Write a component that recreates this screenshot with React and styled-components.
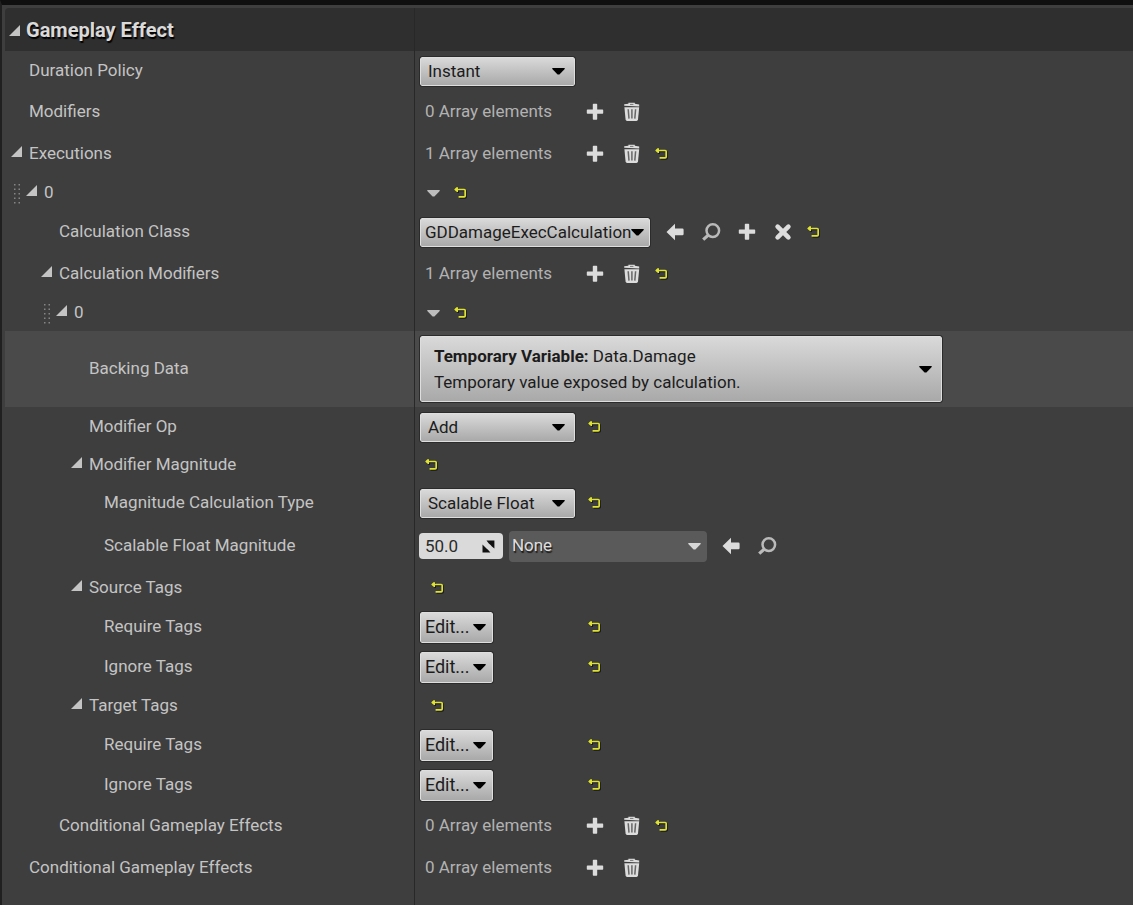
import React from "react";
import styled, { createGlobalStyle } from "styled-components";

const GlobalStyle = createGlobalStyle`
  *, *::before, *::after { box-sizing: border-box; }
  body {
    margin: 0;
    background: #3e3e3e;
    color: #c4c4c4;
    font-family: Roboto, "Liberation Sans", sans-serif;
    font-size: 16px;
    line-height: 20px;
  }
  button, input, select { font: inherit; color: inherit; margin: 0; }
`;

const Panel = styled.main`
  min-height: 100vh;
  display: flex;
  flex-direction: column;
  border-top: 5px solid #0f0f0f;
  border-left: 2px solid #202020;
  padding: 3px 0 0 3px;
`;

const Row = styled.div`
  display: grid;
  grid-template-columns: 29fr 51fr;
  min-height: ${(p) => p.$height}px;
  background: ${(p) => (p.$active ? "#4a4a4a" : "transparent")};
`;

const HeaderRow = styled(Row)`
  background: #2f2f2f;
  border-top-left-radius: 4px;
`;

const Filler = styled(Row)`
  flex: 1;
`;

const NameCell = styled.div`
  display: flex;
  align-items: center;
  min-width: 0;
  padding-left: ${(p) => p.$indent}px;
  white-space: nowrap;
`;

const ValueCell = styled.div`
  display: flex;
  align-items: center;
  gap: ${(p) => p.$gap || 0}px;
  min-width: 0;
  padding-left: ${(p) => p.$inset || 0}px;
  border-left: 1px solid #282828;
`;

const Title = styled.h1`
  margin: 0;
  font-size: 20px;
  line-height: 24px;
  font-weight: 700;
  color: #dadada;
  text-shadow: 1px 2px 1px #000;
`;

const Name = styled.label`
  padding-bottom: 2px;
  font-size: 17px;
`;

const Twisty = styled.button`
  display: flex;
  width: 18px;
  height: 16px;
  padding: 0;
  border: 0;
  background: none;
`;

const HeaderTwisty = styled(Twisty)`
  width: 17px;
  height: 10px;
`;

const Handle = styled.span`
  display: flex;
  width: 13px;
`;

const Count = styled.output`
  width: 152px;
  padding-bottom: 2px;
  font-size: 17px;
  color: #b2b2b2;
  white-space: nowrap;
`;

const IconButton = styled.button`
  display: flex;
  align-items: center;
  justify-content: center;
  width: ${(p) => p.$width || 36}px;
  height: 24px;
  padding: 0;
  border: 0;
  background: none;
  color: #dcdcdc;
`;

const Actions = styled.div`
  display: flex;
  align-items: center;
`;

const Slot = styled.div`
  display: flex;
  width: 155px;
`;

const raised = `
  border: 1px solid #dedede;
  border-radius: 2px;
  outline: 1px solid #2b2b2b;
  background: linear-gradient(#d9d9d9, #a9a9a9);
  color: #1c1c1c;
`;

const ComboBox = styled.div`
  display: grid;
  align-items: center;
  width: ${(p) => p.$width}px;
  > * { grid-area: 1 / 1; }
  > svg { justify-self: end; margin-right: ${(p) => p.$arrow || 10}px; pointer-events: none; }
`;

const Select = styled.select`
  appearance: none;
  width: 100%;
  height: 29px;
  padding: 0 0 0 ${(p) => p.$pad || 7}px;
  font-size: ${(p) => p.$size || 17}px;
  ${raised}
`;

const AssetSelect = styled(Select)`
  height: 31px;
  padding: 0 0 2px 3px;
  border: 0;
  border-radius: 4px;
  outline: 0;
  background: #5a5a5a;
  color: #dedede;
  text-shadow: 1px 2px 1px #1a1a1a;
`;

const EditButton = styled.button`
  display: flex;
  align-items: center;
  justify-content: space-between;
  width: 73px;
  height: 31px;
  padding: 0 6px 0 4px;
  font-size: 18px;
  ${raised}
`;

const CaptureButton = styled.button`
  display: flex;
  align-items: center;
  justify-content: space-between;
  width: 522px;
  max-width: 100%;
  height: 66px;
  padding: 0 9px 0 13px;
  font-size: 17px;
  line-height: 26px;
  text-align: left;
  ${raised}
`;

const NumberBox = styled.div`
  display: flex;
  align-items: center;
  width: 84px;
  height: 26px;
  padding: 0 8px 0 6px;
  border-radius: 4px;
  background: #dadada;
  color: #2a2a2a;
`;

const NumberInput = styled.input`
  flex: 1;
  min-width: 0;
  padding: 0;
  border: 0;
  background: none;
  font-size: 17px;
`;

const Arrow = ({ fill = "#000" }) => (
  <svg width="13" height="7" viewBox="0 0 13 7" aria-hidden="true">
    <path d="M0.3 0H12.7V1L7.4 6.5H5.6L0.3 1Z" fill={fill} />
  </svg>
);

const Corner = () => (
  <svg width="12" height="11" viewBox="0 0 12 11" aria-hidden="true">
    <path d="M11 0V11H0Z" fill="#c4c4c4" />
  </svg>
);

const Dots = () => (
  <svg width="8" height="21" viewBox="0 0 8 21" aria-hidden="true">
    {[0, 1, 2, 3, 4].map((i) => (
      <g key={i} fill="#858585">
        <rect x="1" y={1 + i * 4.5} width="1.5" height="1.5" />
        <rect x="5.5" y={1 + i * 4.5} width="1.5" height="1.5" />
      </g>
    ))}
  </svg>
);

const Plus = () => (
  <svg width="18" height="18" viewBox="0 0 18 18" aria-hidden="true">
    <path d="M6.8 1.5Q6.8 .8 7.5 .8H10.5Q11.2 .8 11.2 1.5V6.6H16.5Q17.2 6.6 17.2 7.3V10Q17.2 10.7 16.5 10.7H11.2V16Q11.2 16.7 10.5 16.7H7.5Q6.8 16.7 6.8 16V10.7H1.5Q.8 10.7 .8 10V7.3Q.8 6.6 1.5 6.6H6.8Z" fill="currentColor" />
  </svg>
);

const Trash = () => (
  <svg width="18" height="20" viewBox="-1 0 18 20" aria-hidden="true">
    <path d="M5.4 1.8V.8H11.8V1.8L16.2 2.4V4.6L1.2 3.8V2.2Z" fill="currentColor" />
    <path d="M7 2.4H10.4" stroke="#777" strokeWidth="1" />
    <path d="M1.4 5.3H16.2L15 17.6Q14.8 19 13.5 19H4.1Q2.8 19 2.6 17.6Z" fill="currentColor" />
    <path d="M5.2 7.3L6 16.6M8.9 7.3V16.6M12.6 7.3L11.8 16.6" stroke="#666" strokeWidth="1.5" fill="none" />
  </svg>
);

const Cross = () => (
  <svg width="18" height="18" viewBox="0 0 18 18" aria-hidden="true">
    <path d="M3.6 3.6L14.4 14.4M14.4 3.6L3.6 14.4" stroke="currentColor" strokeWidth="4.6" strokeLinecap="round" />
  </svg>
);

const Use = () => (
  <svg width="18" height="18" viewBox="0 0 18 18" aria-hidden="true">
    <path d="M.5 9L9 .8V5.6H16.4Q17.6 5.6 17.6 6.8V11Q17.6 12.2 16.4 12.2H9V17.2Z" fill="currentColor" />
  </svg>
);

const Find = () => (
  <svg width="20" height="20" viewBox="0 0 20 20" aria-hidden="true">
    <circle cx="11.8" cy="8.6" r="6.3" fill="none" stroke="#bababa" strokeWidth="2.5" />
    <path d="M7.4 13L2.2 17.6" stroke="#bababa" strokeWidth="3.2" />
  </svg>
);

const ResetShape = ({ color }) => (
  <>
    <path d="M1 3.5H10.2Q11.2 3.5 11.2 4.5V9.8Q11.2 10.8 10.2 10.8H4.6" fill="none" stroke={color} strokeWidth="1.7" />
    <path d="M.2 3.5L2.4 1.2H4V5.9H2.8Z" fill={color} />
  </>
);

const ResetIcon = () => (
  <svg width="14" height="14" viewBox="-1 0 14 14" aria-hidden="true">
    <g transform="translate(1 1)"><ResetShape color="#191922" /></g>
    <ResetShape color="#dfe22e" />
  </svg>
);

const SpinIcon = () => (
  <svg width="13" height="13" viewBox="0 0 13 13" aria-hidden="true">
    <path d="M4.5 .6H12.4V8.6L9.9 6.4L8.6 5L6.8 3.4Z" fill="#111" />
    <path d="M.5 4.6L3 7L4.2 8.2L6 9.8L8.4 12.4H.5Z" fill="#111" />
  </svg>
);

const Reset = () => (
  <IconButton $width={24} aria-label="Reset to default"><ResetIcon /></IconButton>
);

const Expander = () => (
  <Twisty aria-label="Collapse"><Corner /></Twisty>
);

/* Expandable names start 18px earlier so that their text lines up with plain ones. */
function Property({ id, name, indent, height = 40, expandable, handle, active, inset = 5, gap = 0, children }) {
  const lead = (expandable ? 18 : 0) + (handle ? 13 : 0);
  return (
    <Row $height={height} $active={active}>
      <NameCell $indent={indent - lead}>
        {handle && <Handle><Dots /></Handle>}
        {expandable && <Expander />}
        <Name htmlFor={id}>{name}</Name>
      </NameCell>
      <ValueCell $inset={inset} $gap={gap}>{children}</ValueCell>
    </Row>
  );
}

function ArrayProperty({ id, count, reset, ...rest }) {
  return (
    <Property id={id} height={42} inset={10} {...rest}>
      <Count id={id}>{count} Array elements</Count>
      <IconButton aria-label="Add element"><Plus /></IconButton>
      <IconButton aria-label="Empty array"><Trash /></IconButton>
      {reset && <Reset />}
    </Property>
  );
}

function ElementProperty({ id, indent }) {
  return (
    <Property id={id} name="0" indent={indent} height={36} inset={7} gap={2} expandable handle>
      <IconButton id={id} $width={24} aria-label="Element options"><Arrow fill="#bdbdbd" /></IconButton>
      <Reset />
    </Property>
  );
}

function SelectProperty({ id, value, reset, ...rest }) {
  return (
    <Property id={id} gap={7} {...rest}>
      <ComboBox $width={155}>
        <Select id={id}><option>{value}</option></Select>
        <Arrow />
      </ComboBox>
      {reset && <Reset />}
    </Property>
  );
}

function TagProperty({ id, name }) {
  return (
    <Property id={id} name={name} indent={99} gap={7}>
      <Slot><EditButton id={id}>Edit...<Arrow /></EditButton></Slot>
      <Reset />
    </Property>
  );
}

export default function App() {
  return (
    <>
      <GlobalStyle />
      <Panel>
        <HeaderRow $height={43}>
          <NameCell $indent={4}>
            <HeaderTwisty aria-label="Collapse category"><Corner /></HeaderTwisty>
            <Title>Gameplay Effect</Title>
          </NameCell>
          <ValueCell />
        </HeaderRow>

        <SelectProperty id="duration" name="Duration Policy" indent={24} value="Instant" />
        <ArrayProperty id="modifiers" name="Modifiers" indent={24} count={0} />
        <ArrayProperty id="executions" name="Executions" indent={24} count={1} expandable reset />
        <ElementProperty id="execution-0" indent={39} />

        <Property id="calc-class" name="Calculation Class" indent={54} height={42} gap={7}>
          <ComboBox $width={230} $arrow={6}>
            <Select id="calc-class" $pad={4}><option>GDDamageExecCalculation</option></Select>
            <Arrow />
          </ComboBox>
          <Actions>
            <IconButton aria-label="Use selected"><Use /></IconButton>
            <IconButton aria-label="Browse"><Find /></IconButton>
            <IconButton aria-label="Create"><Plus /></IconButton>
            <IconButton aria-label="Clear"><Cross /></IconButton>
            <Reset />
          </Actions>
        </Property>
        <ArrayProperty id="calc-mods" name="Calculation Modifiers" indent={54} count={1} expandable reset />
        <ElementProperty id="calc-mod-0" indent={69} />

        <Property id="backing" name="Backing Data" indent={84} height={76} active>
          <CaptureButton id="backing">
            <span>
              <b>Temporary Variable:</b> Data.Damage
              <br />
              Temporary value exposed by calculation.
            </span>
            <Arrow />
          </CaptureButton>
        </Property>
        <SelectProperty id="op" name="Modifier Op" indent={84} value="Add" reset />
        <Property name="Modifier Magnitude" indent={84} height={36} inset={4} expandable>
          <Reset />
        </Property>
        <SelectProperty id="mag-type" name="Magnitude Calculation Type" indent={99} value="Scalable Float" reset />
        <Property id="magnitude" name="Scalable Float Magnitude" indent={99} height={46} inset={4} gap={6}>
          <NumberBox>
            <NumberInput id="magnitude" type="text" inputMode="decimal" defaultValue="50.0" />
            <SpinIcon />
          </NumberBox>
          <ComboBox $width={198} $arrow={6}>
            <AssetSelect aria-label="Curve table"><option>None</option></AssetSelect>
            <Arrow fill="#d6d6d6" />
          </ComboBox>
          <Actions>
            <IconButton aria-label="Use selected"><Use /></IconButton>
            <IconButton aria-label="Browse"><Find /></IconButton>
          </Actions>
        </Property>

        <Property name="Source Tags" indent={84} height={38} inset={10} expandable>
          <Reset />
        </Property>
        <TagProperty id="source-require" name="Require Tags" />
        <TagProperty id="source-ignore" name="Ignore Tags" />
        <Property name="Target Tags" indent={84} height={38} inset={10} expandable>
          <Reset />
        </Property>
        <TagProperty id="target-require" name="Require Tags" />
        <TagProperty id="target-ignore" name="Ignore Tags" />

        <ArrayProperty id="exec-conditional" name="Conditional Gameplay Effects" indent={54} count={0} reset />
        <ArrayProperty id="conditional" name="Conditional Gameplay Effects" indent={24} count={0} />
        <Filler $height={0}>
          <NameCell />
          <ValueCell />
        </Filler>
      </Panel>
    </>
  );
}
